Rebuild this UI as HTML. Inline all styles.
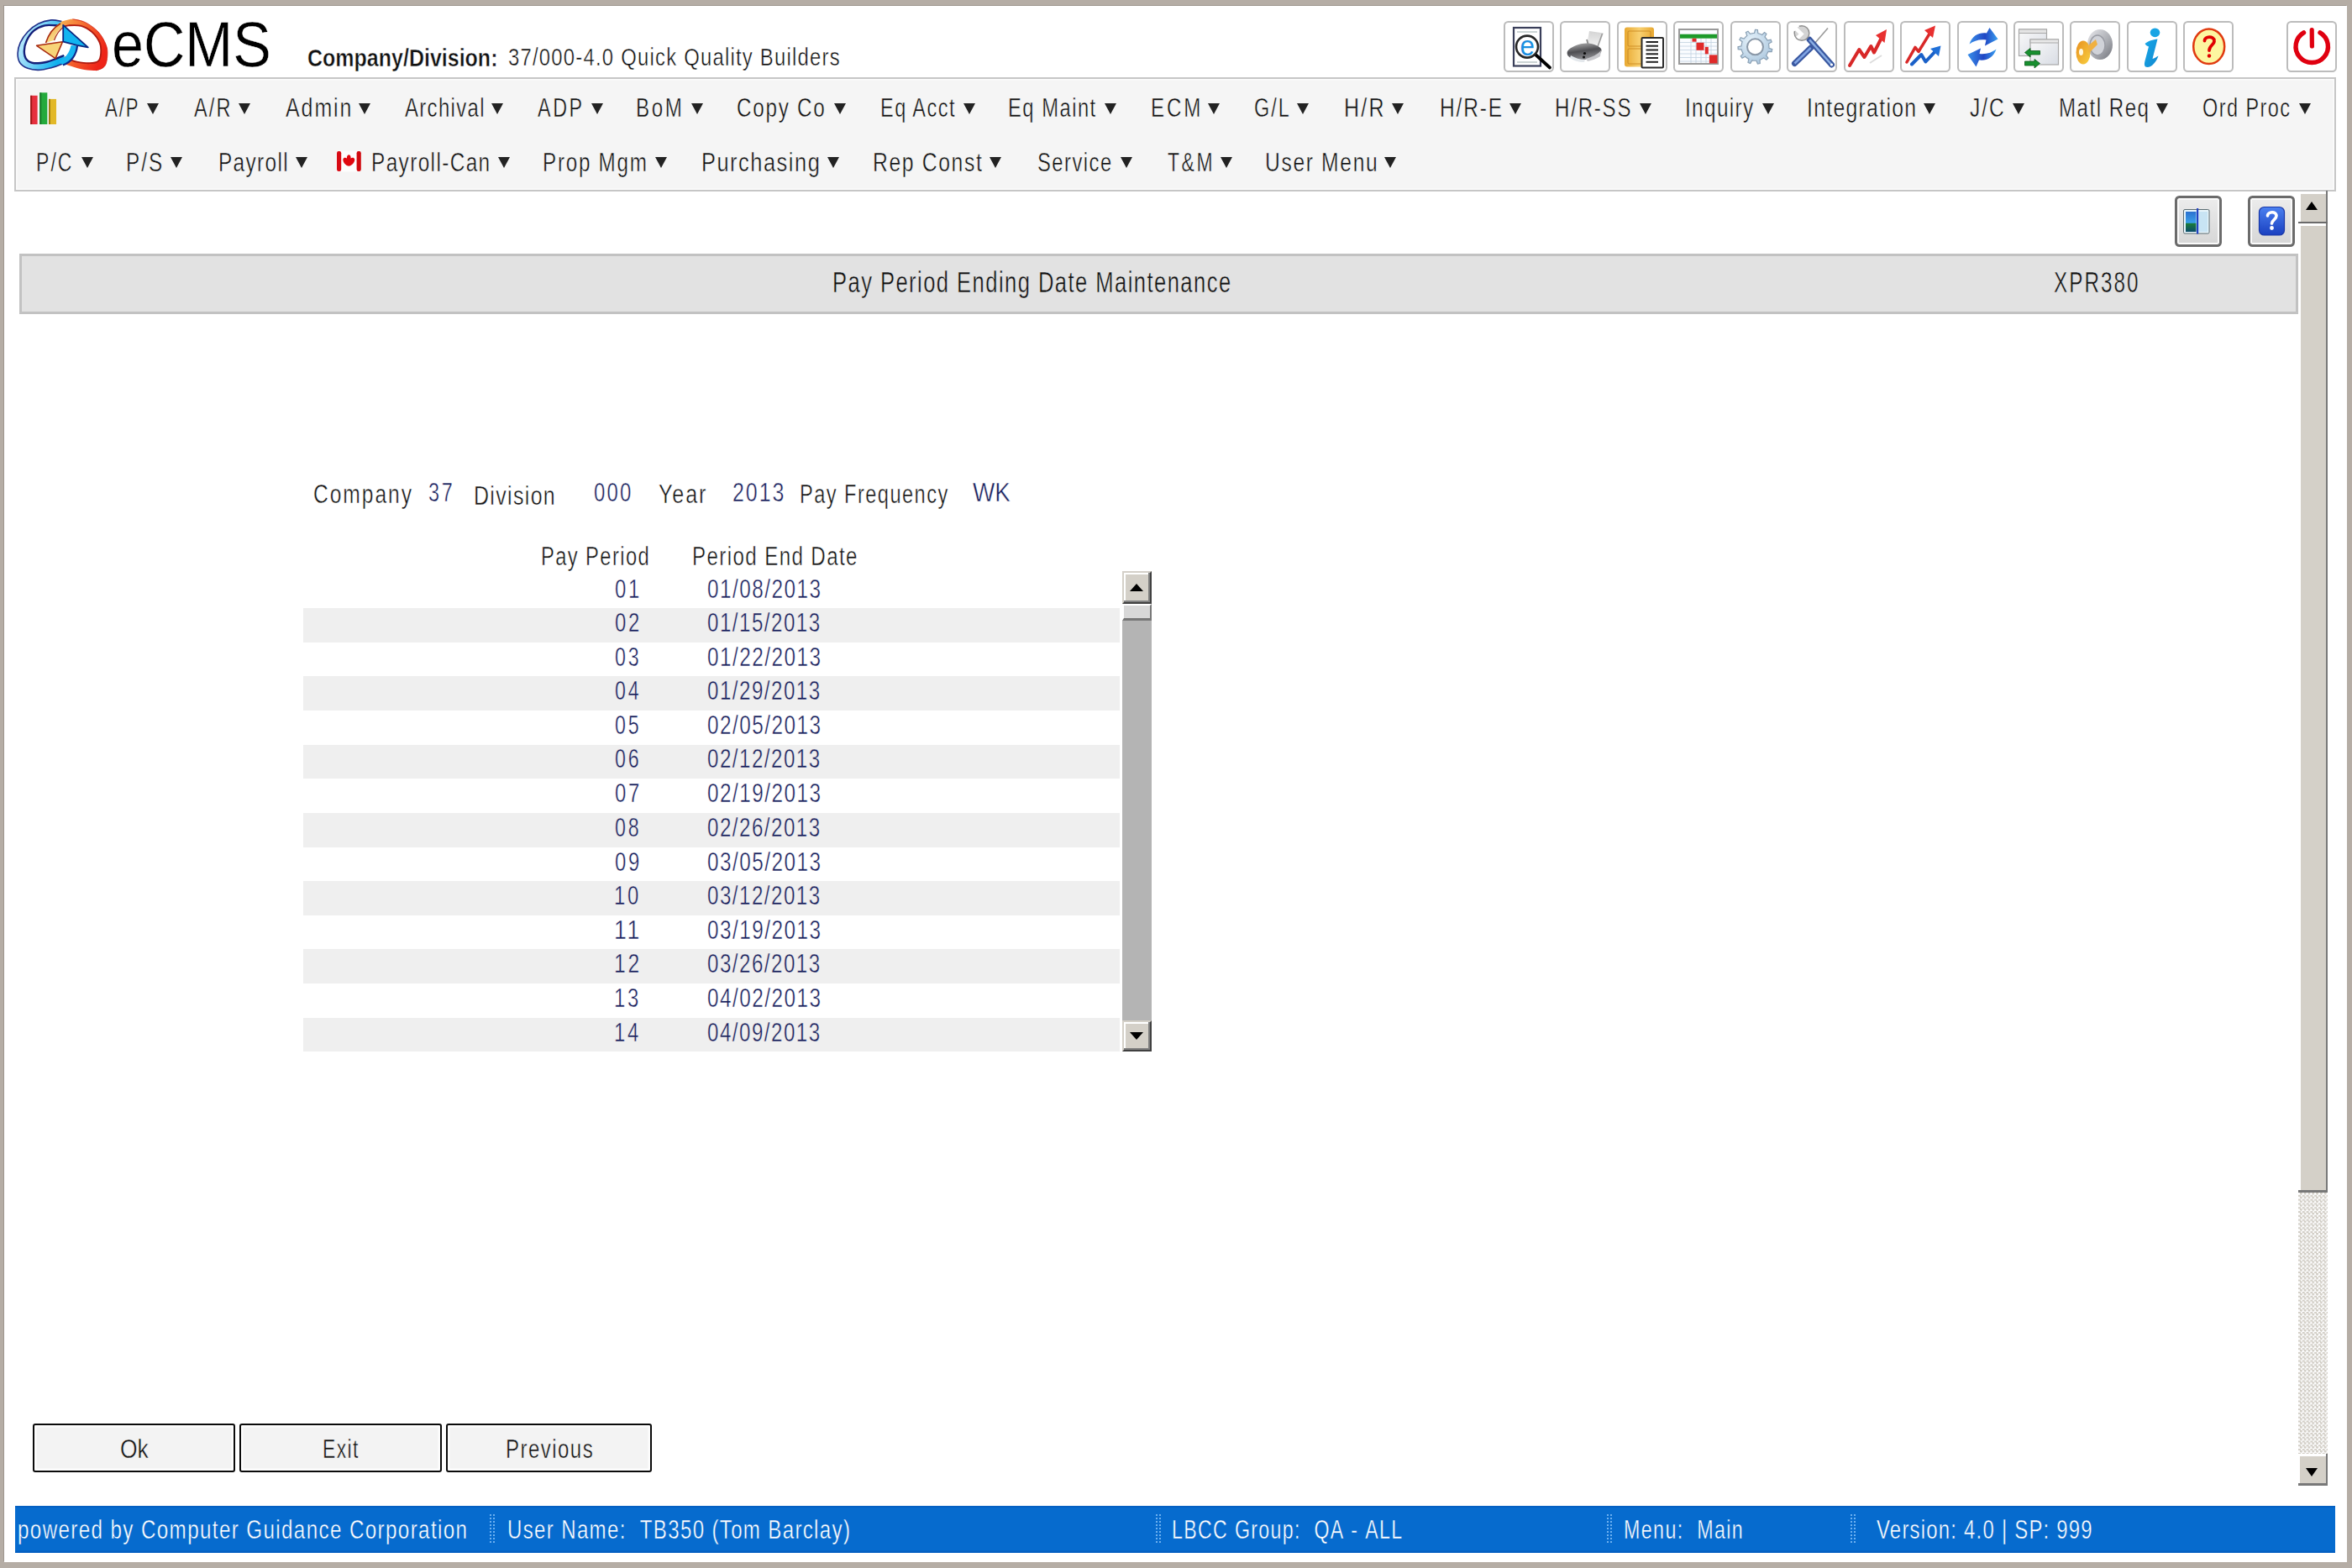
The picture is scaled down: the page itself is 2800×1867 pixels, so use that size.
<!DOCTYPE html>
<html><head><meta charset="utf-8"><style>
html,body{margin:0;padding:0;}
body{width:2800px;height:1867px;position:relative;overflow:hidden;background:#b5ada5;font-family:"Liberation Sans", sans-serif;}
.t{position:absolute;white-space:pre;transform-origin:0 0;}
.arr{position:absolute;width:0;height:0;border-left:7px solid transparent;border-right:7px solid transparent;border-top:13px solid #222;}
.alt{position:absolute;left:361px;width:972px;background:#efefef;}
#page{position:absolute;left:5px;top:7px;width:2789px;height:1853px;background:#fff;box-shadow:-1px -1px 0 #9e968e;}
.abs{position:absolute;box-sizing:border-box;}
#menu{left:17px;top:91.5px;width:2764px;height:136px;background:#f5f5f5;border:2px solid #c6c6c6;box-shadow:inset 0 0 0 1.5px #fcfcfc;}
.tb{position:absolute;top:25px;width:60px;height:61px;box-sizing:border-box;border:2.2px solid #bcbcbc;border-radius:5.5px;background:#fff;overflow:hidden;}
.tb svg{position:absolute;left:0;top:0;}
.cb{position:absolute;top:233px;width:56px;height:61px;box-sizing:border-box;border:3px solid #6b6b6b;border-radius:5.5px;background:linear-gradient(#ececec,#d6d6d6);box-shadow:inset 0 0 0 2px #fafafa;overflow:hidden;}
#title{left:23px;top:302px;width:2713px;height:72px;background:#e2e2e2;border:3px solid #c2c2c2;}
.btn{position:absolute;top:1695px;height:57.5px;box-sizing:border-box;border:2.7px solid #0a0a0a;background:#f3f3f3;border-radius:3px;box-shadow:inset 0 0 0 2.4px #fdfdfd;}
#status{left:17.8px;top:1792.5px;width:2762.6px;height:56.3px;background:#066bce;box-shadow:inset 0 2px 0 #0460c2, inset 0 -2.5px 0 #0460c2;}
.sep{position:absolute;top:1802px;width:8px;height:37px;background-image:radial-gradient(circle,#6cb0f0 1.3px,transparent 1.4px);background-size:4px 4px;}
.sbtn{position:absolute;box-sizing:border-box;background:#d4d0c8;border-style:solid;border-width:2px;border-color:#d4d0c8 #404040 #404040 #d4d0c8;box-shadow:inset -2px -2px 0 #808080, inset 2px 2px 0 #fff;}
.tri-up{position:absolute;width:0;height:0;border-left:8px solid transparent;border-right:8px solid transparent;border-bottom:9px solid #000;}
.tri-dn{position:absolute;width:0;height:0;border-left:8px solid transparent;border-right:8px solid transparent;border-top:9px solid #000;}
.ic{position:absolute;overflow:visible;}

</style></head><body>
<div id="page"></div>
<div id="menu" class="abs"></div>
<div id="title" class="abs"></div>
<div id="status" class="abs"></div>
<div class="sep" style="left:582px"></div><div class="sep" style="left:1375px"></div><div class="sep" style="left:1912px"></div><div class="sep" style="left:2202px"></div>
<div class="btn" style="left:39px;width:241px"></div>
<div class="btn" style="left:285px;width:241px"></div>
<div class="btn" style="left:531px;width:245px"></div>
<!-- outer scrollbar -->
<div class="abs" style="left:2739px;top:231.2px;width:30px;height:1186px;background:#d4d0c8"></div>
<div class="abs" style="left:2768.9px;top:227px;width:2px;height:1193px;background:#787878"></div>
<div class="abs" style="left:2736.4px;top:263.8px;width:34.4px;height:2.5px;background:#6a6a6a"></div>
<div class="abs" style="left:2739px;top:266.3px;width:29.9px;height:3.2px;background:#fff"></div>
<div class="abs" style="left:2736.4px;top:1417px;width:34.4px;height:3.2px;background:#787878"></div>
<div class="abs" style="left:2735.7px;top:1420.2px;width:35.7px;height:311px;background-color:#e8e6e2;background-image:repeating-conic-gradient(#d2cec6 0 25%,#fcfcfc 0 50%);background-size:4.8px 4.8px"></div>
<div class="abs" style="left:2738.3px;top:1733.8px;width:30.6px;height:35px;background:#d4d0c8"></div>
<div class="abs" style="left:2768.9px;top:1730.6px;width:2px;height:38.9px;background:#787878"></div>
<div class="abs" style="left:2736.4px;top:1766.3px;width:34.4px;height:3.2px;background:#787878"></div>
<div class="abs" style="left:2745px;top:239.5px;width:0;height:0;border-left:7.8px solid transparent;border-right:7.8px solid transparent;border-bottom:10.5px solid #000"></div>
<div class="abs" style="left:2745px;top:1747.5px;width:0;height:0;border-left:7.7px solid transparent;border-right:7.7px solid transparent;border-top:10.2px solid #000"></div>
<!-- inner scrollbar -->
<div class="abs" style="left:1336px;top:680px;width:35px;height:572px;background:#b4b4b4"></div>
<div class="sbtn" style="left:1336px;top:680px;width:35px;height:39px"></div>
<div class="abs" style="left:1336px;top:719px;width:35px;height:20px;background:#d8d8d8;border:2px solid #fff;border-color:#fff #777 #777 #fff;border-bottom-width:3px"></div>
<div class="sbtn" style="left:1336px;top:1215px;width:35px;height:37px"></div>
<div class="tri-up" style="left:1345px;top:695px"></div>
<div class="tri-dn" style="left:1345px;top:1229px"></div>
<!-- content buttons -->
<div class="cb" style="left:2589px"></div>
<div class="cb" style="left:2676px"></div>
<!-- toolbar -->
<div class="tb" style="left:1790px"></div><div class="tb" style="left:1857px"></div><div class="tb" style="left:1925px"></div>
<div class="tb" style="left:1992px"></div><div class="tb" style="left:2060px"></div><div class="tb" style="left:2127px"></div>
<div class="tb" style="left:2195px"></div><div class="tb" style="left:2262px"></div><div class="tb" style="left:2330px"></div>
<div class="tb" style="left:2397px"></div><div class="tb" style="left:2464px"></div><div class="tb" style="left:2532px"></div>
<div class="tb" style="left:2599px"></div><div class="tb" style="left:2722px"></div>
<!-- logo -->
<svg class="ic" style="left:15px;top:15px" width="120" height="80" viewBox="0 0 120 80">
<defs>
<linearGradient id="lgb" x1="0" y1="0" x2="1" y2="0.4"><stop offset="0" stop-color="#d8f6ff"/><stop offset="0.45" stop-color="#8ad8f8"/><stop offset="1" stop-color="#10b0ee"/></linearGradient>
<linearGradient id="lgr" x1="0" y1="0" x2="1" y2="0.5"><stop offset="0" stop-color="#f8b050"/><stop offset="0.45" stop-color="#f46a30"/><stop offset="1" stop-color="#ee2418"/></linearGradient>
<linearGradient id="lgo" x1="0" y1="0" x2="0.4" y2="1"><stop offset="0" stop-color="#f6a850"/><stop offset="1" stop-color="#f8e08a"/></linearGradient>
</defs>
<path d="M58.50,10.50 C56.40,10.23 50.55,8.43 45.90,8.90 C41.25,9.37 35.27,10.95 30.60,13.30 C25.93,15.65 21.47,19.27 17.90,23.00 C14.33,26.73 11.17,31.45 9.20,35.70 C7.23,39.95 6.18,44.50 6.10,48.50 C6.02,52.50 6.73,56.73 8.70,59.70 C10.67,62.67 14.25,64.85 17.90,66.30 C21.55,67.75 25.93,68.48 30.60,68.40 C35.27,68.32 41.22,67.00 45.90,65.80 C50.58,64.60 55.85,62.42 58.70,61.20 C61.55,59.98 62.28,58.95 63.00,58.50 L61.20,51.00 C59.50,51.68 54.40,53.82 51.00,55.10 C47.60,56.38 45.05,57.85 40.80,58.70 C36.55,59.55 29.50,60.63 25.50,60.20 C21.50,59.77 18.75,58.48 16.80,56.10 C14.85,53.72 13.80,49.72 13.80,45.90 C13.80,42.08 14.85,37.28 16.80,33.20 C18.75,29.12 21.92,24.38 25.50,21.40 C29.08,18.42 34.05,16.32 38.30,15.30 C42.55,14.28 47.72,15.10 51.00,15.30 C54.28,15.50 56.83,16.30 58.00,16.50 Z" fill="url(#lgb)"/>
<path d="M58.50,10.50 C56.40,10.23 50.55,8.43 45.90,8.90 C41.25,9.37 35.27,10.95 30.60,13.30 C25.93,15.65 21.47,19.27 17.90,23.00 C14.33,26.73 11.17,31.45 9.20,35.70 C7.23,39.95 6.18,44.50 6.10,48.50 C6.02,52.50 6.73,56.73 8.70,59.70 C10.67,62.67 14.25,64.85 17.90,66.30 C21.55,67.75 25.93,68.48 30.60,68.40 C35.27,68.32 41.22,67.00 45.90,65.80 C50.58,64.60 55.85,62.42 58.70,61.20 C61.55,59.98 62.28,58.95 63.00,58.50" fill="none" stroke="#20308a" stroke-width="1.6"/>
<path d="M58.00,16.50 C56.83,16.30 54.28,15.50 51.00,15.30 C47.72,15.10 42.55,14.28 38.30,15.30 C34.05,16.32 29.08,18.42 25.50,21.40 C21.92,24.38 18.75,29.12 16.80,33.20 C14.85,37.28 13.80,42.08 13.80,45.90 C13.80,49.72 14.85,53.72 16.80,56.10 C18.75,58.48 21.50,59.77 25.50,60.20 C29.50,60.63 36.55,59.55 40.80,58.70 C45.05,57.85 47.60,56.38 51.00,55.10 C54.40,53.82 59.50,51.68 61.20,51.00" fill="none" stroke="#14207a" stroke-width="2.4"/>
<path d="M57.00,11.00 C59.40,10.45 66.45,7.58 71.40,7.70 C76.35,7.82 81.60,9.15 86.70,11.70 C91.80,14.25 97.92,18.57 102.00,23.00 C106.08,27.43 109.40,33.63 111.20,38.30 C113.00,42.97 113.05,46.75 112.80,51.00 C112.55,55.25 111.92,60.82 109.70,63.80 C107.48,66.78 104.18,68.32 99.50,68.90 C94.82,69.48 87.13,68.32 81.60,67.30 C76.07,66.28 70.32,64.10 66.30,62.80 C62.28,61.50 58.97,60.05 57.50,59.50 L62.00,53.00 C63.15,53.52 66.48,55.15 68.90,56.10 C71.32,57.05 72.68,58.02 76.50,58.70 C80.32,59.38 87.55,60.37 91.80,60.20 C96.05,60.03 99.78,59.65 102.00,57.70 C104.22,55.75 104.83,52.17 105.10,48.50 C105.37,44.83 105.38,39.95 103.60,35.70 C101.82,31.45 98.07,26.32 94.40,23.00 C90.73,19.68 86.28,17.08 81.60,15.80 C76.92,14.52 69.90,15.10 66.30,15.30 C62.70,15.50 61.05,16.72 60.00,17.00 Z" fill="url(#lgr)"/>
<path d="M60.00,17.00 C61.05,16.72 62.70,15.50 66.30,15.30 C69.90,15.10 76.92,14.52 81.60,15.80 C86.28,17.08 90.73,19.68 94.40,23.00 C98.07,26.32 101.82,31.45 103.60,35.70 C105.38,39.95 105.37,44.83 105.10,48.50 C104.83,52.17 104.22,55.75 102.00,57.70 C99.78,59.65 96.05,60.03 91.80,60.20 C87.55,60.37 80.32,59.38 76.50,58.70 C72.68,58.02 71.32,57.05 68.90,56.10 C66.48,55.15 63.15,53.52 62.00,53.00" fill="none" stroke="#b01a10" stroke-width="1.8"/>
<path d="M71.40,7.70 C73.95,8.37 81.60,9.15 86.70,11.70 C91.80,14.25 97.92,18.57 102.00,23.00 C106.08,27.43 109.40,33.63 111.20,38.30 C113.00,42.97 113.05,46.75 112.80,51.00 C112.55,55.25 111.92,60.82 109.70,63.80 C107.48,66.78 101.20,68.05 99.50,68.90" fill="none" stroke="#d02010" stroke-width="0.8"/>
<path d="M57,12 C50,16 43,24 39.5,36 L49,33 C51,25 55,20 61.5,16 Z" fill="url(#lgo)"/>
<path d="M57,13 C50,17 43,25 39.5,36" fill="none" stroke="#a82a10" stroke-width="1.6"/>
<path d="M61,17 C55,21 52,26 49.5,33" fill="none" stroke="#a82a10" stroke-width="1.2"/>
<polygon points="28.6,39.3 59.5,34.7 51,54.6" fill="#f8d478" stroke="#a82a10" stroke-width="1.6" stroke-linejoin="round"/>
<path d="M55,58 C62,55 68,48 69.5,39 L77,39.5 C76,50 70,59 60,62.5 Z" fill="#18b6f2"/>
<path d="M77,39.5 C76,50 70,59 60,62.5" fill="none" stroke="#10288a" stroke-width="2.2"/>
<polygon points="60.2,14.8 89.8,41.3 76.5,38.8 60.2,34.7" fill="#12b4f0" stroke="#0a2680" stroke-width="1.8" stroke-linejoin="round"/>
</svg>
<!-- bar chart -->
<svg class="ic" style="left:34px;top:108px" width="36" height="42" viewBox="0 0 36 42">
<rect x="2.2" y="5.8" width="8.4" height="34.2" fill="#e6303e"/><rect x="2.2" y="5.8" width="2" height="34.2" fill="#a01818"/>
<rect x="13.3" y="2.3" width="9" height="37.7" fill="#24aa3c"/><rect x="13.3" y="2.3" width="2" height="37.7" fill="#187a28"/>
<rect x="24" y="9.9" width="9" height="30.1" fill="#e2b828"/><rect x="24" y="9.9" width="2" height="30.1" fill="#a08010"/>
</svg>
<!-- canada flag -->
<svg class="ic" style="left:398px;top:178px" width="34" height="28" viewBox="0 0 34 28">
<rect x="2.5" y="1.5" width="29" height="25" fill="#fdfdfd"/>
<rect x="3" y="2" width="5.2" height="24" rx="2.2" fill="#d80a14"/><rect x="26.6" y="2" width="5.2" height="24" rx="2.2" fill="#d00a10"/>
<path d="M17.3,6.2 C19.2,6.2 19.8,8.5 19.6,10.5 C21,9.5 23.5,9.3 24.2,11.5 C24.6,13.5 23,16.5 21,18 C19.8,19 18.5,19.5 17.3,19.8 C16,19.5 14.6,19 13.5,18 C11.5,16.5 10,13.5 10.4,11.5 C11,9.3 13.5,9.5 15,10.5 C14.8,8.5 15.4,6.2 17.3,6.2 Z" fill="#e00810"/>
</svg>
<!-- toolbar icons -->
<svg class="ic" style="left:1789.5px;top:24.7px" width="60" height="61" viewBox="0 0 60 61">
<rect x="12" y="8" width="32" height="45.5" fill="#fff" stroke="#3a3f5a" stroke-width="2.2"/>
<line x1="16" y1="13" x2="40" y2="13" stroke="#9aa" stroke-width="1"/><line x1="16" y1="49" x2="40" y2="49" stroke="#9aa" stroke-width="1"/>
<line x1="38" y1="40" x2="55" y2="55.5" stroke="#000" stroke-width="3.8" stroke-linecap="round"/>
<circle cx="28" cy="30.6" r="13" fill="#fff" stroke="#262626" stroke-width="2.6"/>
<text x="28.2" y="40.8" text-anchor="middle" font-family="Liberation Sans" font-size="33" fill="#1a8ee0" transform="translate(28.2,40.8) scale(0.95,1) translate(-28.2,-40.8)">e</text>
</svg>
<svg class="ic" style="left:1857.3px;top:24.7px" width="60" height="61" viewBox="0 0 60 61">
<defs><linearGradient id="pg" x1="0" y1="0" x2="0" y2="1"><stop offset="0" stop-color="#d4d4d4"/><stop offset="1" stop-color="#f2f2f2"/></linearGradient>
<linearGradient id="pb" x1="0" y1="0" x2="0.3" y2="1"><stop offset="0" stop-color="#b8b8b8"/><stop offset="0.55" stop-color="#4e4e52"/><stop offset="1" stop-color="#8a8a8e"/></linearGradient></defs>
<path d="M35,12 L52,14.5 L46,31 L32,29 Z" fill="url(#pg)"/>
<path d="M50.5,15 L44.5,32" stroke="#9a9a9a" stroke-width="1.5"/>
<path d="M9,36 C12,31 24,26 33,26.5 C40,27 48,30 49.5,34 C50,38 46,42 40,44 C32,47 20,47 13,44 C9,42 8,39 9,36 Z" fill="url(#pb)"/>
<path d="M31,45 C38,43 45,40 49,35 L48,42 C44,45 38,47 33,48 Z" fill="#c8c8cc"/>
<path d="M13,41 C18,44 24,46 30,46 L29,49 C22,49 16,47 12,44 Z" fill="#e4e8ec"/>
<circle cx="29.5" cy="38.5" r="1.6" fill="#0a0a0a"/><circle cx="28.5" cy="43" r="1.5" fill="#111"/>
<path d="M32,22 L33.5,27" stroke="#8a8a8a" stroke-width="1.8"/>
</svg>
<svg class="ic" style="left:1924.5px;top:24.7px" width="60" height="61" viewBox="0 0 60 61">
<defs><linearGradient id="cab" x1="0" y1="0" x2="1" y2="0"><stop offset="0" stop-color="#e8a830"/><stop offset="0.5" stop-color="#f8d070"/><stop offset="1" stop-color="#e8a830"/></linearGradient></defs>
<rect x="9" y="7.5" width="35" height="47" rx="3" fill="url(#cab)"/>
<rect x="13" y="12" width="27" height="18" rx="1.5" fill="none" stroke="#d09028" stroke-width="1.2"/>
<rect x="13" y="33" width="27" height="18" rx="1.5" fill="none" stroke="#d09028" stroke-width="1.2"/>
<rect x="29.5" y="20" width="25.5" height="35.5" rx="1" fill="#fff" stroke="#2a2a2a" stroke-width="2"/>
<g stroke="#222" stroke-width="2"><line x1="34.5" y1="25" x2="49" y2="25"/><line x1="34.5" y1="29.7" x2="49" y2="29.7"/><line x1="34.5" y1="34.5" x2="49" y2="34.5"/><line x1="34.5" y1="39.3" x2="49" y2="39.3"/><line x1="34.5" y1="44" x2="49" y2="44"/><line x1="34.5" y1="48.8" x2="49" y2="48.8"/></g>
</svg>
<svg class="ic" style="left:1992.1px;top:24.7px" width="60" height="61" viewBox="0 0 60 61">
<rect x="7" y="10" width="46" height="41" fill="#fafcff" stroke="#9a9a9a" stroke-width="2"/>
<rect x="8" y="15.7" width="44" height="5" fill="#1c9a2a"/>
<g stroke="#c0d0e0" stroke-width="0.8"><line x1="8" y1="25.5" x2="52" y2="25.5"/><line x1="8" y1="30" x2="52" y2="30"/><line x1="8" y1="34.5" x2="52" y2="34.5"/><line x1="8" y1="39" x2="52" y2="39"/><line x1="8" y1="43.5" x2="52" y2="43.5"/><line x1="8" y1="48" x2="52" y2="48"/>
<line x1="21" y1="21" x2="21" y2="50"/><line x1="27" y1="21" x2="27" y2="50"/><line x1="33" y1="21" x2="33" y2="50"/><line x1="39" y1="21" x2="39" y2="50"/><line x1="45" y1="21" x2="45" y2="50"/></g>
<g fill="#e02a2a"><rect x="22.5" y="20.7" width="5" height="4"/><rect x="27.5" y="25.8" width="9" height="9"/><rect x="37.8" y="30.9" width="4" height="8.4"/><rect x="42.9" y="40.4" width="9.5" height="10"/></g>
</svg>
<svg class="ic" style="left:2059.5px;top:24.7px" width="60" height="61" viewBox="0 0 60 61">
<defs><radialGradient id="gear" cx="0.4" cy="0.35" r="0.7"><stop offset="0" stop-color="#e8f4fc"/><stop offset="1" stop-color="#a8c4dc"/></radialGradient></defs>
<g transform="translate(29.5,30.8)">
<path d="M16.50,0.00 L16.44,1.41 L20.29,2.92 L19.67,5.78 L15.54,5.54 L13.88,8.92 L13.88,8.92 L13.07,10.08 L15.49,13.42 L13.42,15.49 L10.08,13.07 L6.85,15.01 L6.85,15.01 L5.54,15.54 L5.78,19.67 L2.92,20.29 L1.41,16.44 L-2.35,16.33 L-2.35,16.33 L-3.74,16.07 L-5.78,19.67 L-8.52,18.65 L-7.70,14.59 L-10.81,12.47 L-10.81,12.47 L-11.83,11.50 L-15.49,13.42 L-17.25,11.08 L-14.37,8.11 L-15.83,4.65 L-15.83,4.65 L-16.17,3.28 L-20.29,2.92 L-20.50,0.00 L-16.47,-0.94 L-15.83,-4.65 L-15.83,-4.65 L-15.38,-5.99 L-18.65,-8.52 L-17.25,-11.08 L-13.35,-9.70 L-10.81,-12.47 L-10.81,-12.47 L-9.70,-13.35 L-11.08,-17.25 L-8.52,-18.65 L-5.99,-15.38 L-2.35,-16.33 L-2.35,-16.33 L-0.94,-16.47 L-0.00,-20.50 L2.92,-20.29 L3.28,-16.17 L6.85,-15.01 L6.85,-15.01 L8.11,-14.37 L11.08,-17.25 L13.42,-15.49 L11.50,-11.83 L13.88,-8.92 L13.88,-8.92 L14.59,-7.70 L18.65,-8.52 L19.67,-5.78 L16.07,-3.74 L16.50,-0.00 Z" fill="url(#gear)" stroke="#8aa0b4" stroke-width="1.2"/>
<circle r="9.5" fill="#fff" stroke="#8a98a8" stroke-width="2"/>
</g>
</svg>
<svg class="ic" style="left:2127.1px;top:24.7px" width="60" height="61" viewBox="0 0 60 61">
<line x1="28.7" y1="32" x2="49" y2="8.4" stroke="#9a9a9a" stroke-width="1.6"/>
<line x1="9.5" y1="50.5" x2="28.7" y2="32" stroke="#3a58a0" stroke-width="7" stroke-linecap="round"/>
<line x1="9.5" y1="50.5" x2="28.7" y2="32" stroke="#80a4e4" stroke-width="2.5"/>
<line x1="27.2" y1="22.3" x2="53.5" y2="52" stroke="#3a58a0" stroke-width="7" stroke-linecap="round"/>
<line x1="27.2" y1="22.3" x2="53.5" y2="52" stroke="#8aaee4" stroke-width="2.5"/>
<circle cx="53.5" cy="52" r="1.6" fill="#fff"/>
<circle cx="18" cy="14.5" r="8.8" fill="#d4d4d4"/>
<path d="M10,8 L17.5,15.5 L12,21" fill="none" stroke="#fff" stroke-width="4.5"/>
<circle cx="18" cy="14.5" r="8.8" fill="none" stroke="#909090" stroke-width="1.5" stroke-dasharray="30 8"/>
</svg>
<svg class="ic" style="left:2194.5px;top:24.7px" width="60" height="61" viewBox="0 0 60 61">
<polyline points="7,53 18.3,34 24.5,43 32.3,30 36,37.5 46,18" fill="none" stroke="#d82828" stroke-width="4" stroke-linejoin="round" stroke-linecap="round"/>
<polygon points="51,10 38,17 48.5,26" fill="#e83030"/>
<line x1="31" y1="50" x2="45" y2="41" stroke="#ddd" stroke-width="2"/>
</svg>
<svg class="ic" style="left:2262.1px;top:24.7px" width="60" height="61" viewBox="0 0 60 61">
<polyline points="8,49 18,31.4 22,36.5 37,12" fill="none" stroke="#d82828" stroke-width="3.5" stroke-linejoin="round" stroke-linecap="round"/>
<polygon points="42,5.6 29,11 39,20" fill="#e83030"/>
<polyline points="14,51.5 25.3,40 30.4,48.5 43,35" fill="none" stroke="#1a60c8" stroke-width="4" stroke-linejoin="round" stroke-linecap="round"/>
<polygon points="48.5,29.5 36,33 46,42" fill="#2070d8"/>
</svg>
<svg class="ic" style="left:2329.5px;top:24.7px" width="60" height="61" viewBox="0 0 60 61">
<defs><linearGradient id="rf" x1="0" y1="0" x2="1" y2="0"><stop offset="0" stop-color="#3a90ea"/><stop offset="0.55" stop-color="#2046c4"/><stop offset="1" stop-color="#3aa0f0"/></linearGradient></defs>
<path d="M14.5,27.5 C18,17 26,13.5 35,14.5 L38.5,8 L48.5,21.5 L33,29.5 L34.5,22.5 C26,21.5 20,23.5 14.5,27.5 Z" fill="url(#rf)"/>
<path d="M46.5,33.5 C43,44 35,47.5 26,46.5 L22.5,54.5 L12.5,40 L28,32.5 L26.5,39 C35,40 41,37.5 46.5,33.5 Z" fill="url(#rf)"/>
</svg>
<svg class="ic" style="left:2397.1px;top:24.7px" width="60" height="61" viewBox="0 0 60 61">
<defs><linearGradient id="wn" x1="0" y1="0" x2="1" y2="1"><stop offset="0" stop-color="#fafafa"/><stop offset="1" stop-color="#d8dce4"/></linearGradient></defs>
<rect x="6.5" y="10" width="33" height="31.5" fill="url(#wn)" stroke="#a8a8a8" stroke-width="1.2"/>
<rect x="6.5" y="10" width="33" height="4.5" fill="#e4e4e4" stroke="#a8a8a8" stroke-width="1"/>
<rect x="20" y="22" width="33.5" height="30" fill="url(#wn)" stroke="#a8a8a8" stroke-width="1.2"/>
<rect x="20" y="22" width="33.5" height="4" fill="#e8e8e8" stroke="#a8a8a8" stroke-width="1"/>
<polygon points="13.5,37.5 20,32.5 20,35.5 31.5,35.5 31.5,40 20,40 20,43" fill="#189030" stroke="#0a5a18" stroke-width="0.8"/>
<polygon points="31.5,50.5 25,45.5 25,48 13.5,48 13.5,53 25,53 25,56" fill="#189030" stroke="#0a5a18" stroke-width="0.8"/>
</svg>
<svg class="ic" style="left:2464.5px;top:24.7px" width="60" height="61" viewBox="0 0 60 61">
<defs><linearGradient id="dsk" x1="0" y1="0" x2="1" y2="1"><stop offset="0" stop-color="#e8e8ec"/><stop offset="0.6" stop-color="#a8aab0"/><stop offset="1" stop-color="#70727a"/></linearGradient>
<linearGradient id="key" x1="0" y1="0" x2="1" y2="1"><stop offset="0" stop-color="#e89020"/><stop offset="1" stop-color="#f8d040"/></linearGradient></defs>
<ellipse cx="35" cy="28" rx="15" ry="18" fill="url(#dsk)"/>
<ellipse cx="32" cy="29" rx="9" ry="12" fill="#d0d2d8" stroke="#9a9ca4" stroke-width="1.5"/>
<ellipse cx="15" cy="37.5" rx="8.5" ry="14" fill="url(#key)"/>
<ellipse cx="12.5" cy="37" rx="2.5" ry="4" fill="#fff8e0"/>
<polygon points="20,30 30,22 32,28 22,38" fill="#f0b040"/>
</svg>
<svg class="ic" style="left:2532.1px;top:24.7px" width="60" height="61" viewBox="0 0 60 61">
<defs><linearGradient id="ib" x1="0" y1="0" x2="1" y2="1"><stop offset="0" stop-color="#18a8e8"/><stop offset="1" stop-color="#1288d0"/></linearGradient></defs>
<ellipse cx="33.5" cy="13.8" rx="5.8" ry="5.4" fill="#18a4e4"/>
<path d="M21.5,27 C25,24 31,22 36.5,21.5 L30.5,45 C32.5,44.5 35,43 37.5,41.5 C35,49 29.5,55 24.5,55 C20.5,55 20.5,51.5 21.5,47.5 L26,30.5 C24.5,30 23,29.5 21.5,27 Z" fill="url(#ib)"/>
</svg>
<svg class="ic" style="left:2599.8px;top:25px" width="60" height="61" viewBox="0 0 60 61">
<ellipse cx="29.7" cy="30.3" rx="18.5" ry="20.8" fill="#fdf6a0" stroke="#e03a10" stroke-width="2.5"/>
<path d="M24.5,23.5 C24.5,18 35.5,17.5 36,23.5 C36.5,28 30,29 30,35" fill="none" stroke="#e00000" stroke-width="3.8" stroke-linecap="round"/>
<circle cx="30" cy="41.5" r="2.2" fill="#e00000"/>
</svg>
<svg class="ic" style="left:2721.8px;top:25px" width="60" height="61" viewBox="0 0 60 61">
<path d="M20.5,13.8 A19.2,19.2 0 1 0 40,13.8" fill="none" stroke="#e00010" stroke-width="5.4" stroke-linecap="round"/>
<line x1="30.2" y1="10.5" x2="30.4" y2="30" stroke="#e00010" stroke-width="5.2" stroke-linecap="round"/>
</svg>
<!-- content buttons icons -->
<svg class="ic" style="left:2588.8px;top:233px" width="56" height="61" viewBox="0 0 56 61">
<defs><linearGradient id="sky" x1="0" y1="0" x2="0" y2="1"><stop offset="0" stop-color="#2a70d0"/><stop offset="0.55" stop-color="#3aa0e8"/><stop offset="0.6" stop-color="#1a7a3a"/><stop offset="1" stop-color="#0a4a6a"/></linearGradient></defs>
<rect x="10.5" y="16.5" width="30.5" height="28.5" rx="1.5" fill="#e8f6fc" stroke="#5a6a70" stroke-width="1"/>
<rect x="13" y="19" width="12.5" height="24" fill="url(#sky)"/>
<rect x="28.5" y="19" width="10.5" height="24" fill="#c8e4f4"/>
<rect x="26" y="15" width="2.2" height="30.5" fill="#2040c0"/>
</svg>
<svg class="ic" style="left:2675.5px;top:233px" width="56" height="61" viewBox="0 0 56 61">
<defs><linearGradient id="qb" x1="0" y1="0" x2="0" y2="1"><stop offset="0" stop-color="#4a80f0"/><stop offset="1" stop-color="#1a40c0"/></linearGradient></defs>
<rect x="13.5" y="13.5" width="30" height="33.5" rx="6" fill="url(#qb)" stroke="#1a38a8" stroke-width="1.2"/>
<path d="M23.5,24 C23.5,18.5 34,18 34,24 C34,28 29,28.5 28.5,33" fill="none" stroke="#fff" stroke-width="3.6" stroke-linecap="round"/>
<circle cx="28.5" cy="38.5" r="2.4" fill="#fff"/>
</svg>

<div class="alt" style="top:724.22px;height:40.62px"></div><div class="alt" style="top:805.46px;height:40.62px"></div><div class="alt" style="top:886.70px;height:40.62px"></div><div class="alt" style="top:967.94px;height:40.62px"></div><div class="alt" style="top:1049.18px;height:40.62px"></div><div class="alt" style="top:1130.42px;height:40.62px"></div><div class="alt" style="top:1211.66px;height:40.62px"></div>
<div class="arr" style="left:175.3px;top:122.7px"></div><div class="arr" style="left:284.0px;top:122.7px"></div><div class="arr" style="left:427.0px;top:122.7px"></div><div class="arr" style="left:585.0px;top:122.7px"></div><div class="arr" style="left:704.0px;top:122.7px"></div><div class="arr" style="left:823.0px;top:122.7px"></div><div class="arr" style="left:993.0px;top:122.7px"></div><div class="arr" style="left:1147.0px;top:122.7px"></div><div class="arr" style="left:1315.0px;top:122.7px"></div><div class="arr" style="left:1438.0px;top:122.7px"></div><div class="arr" style="left:1544.0px;top:122.7px"></div><div class="arr" style="left:1657.0px;top:122.7px"></div><div class="arr" style="left:1797.0px;top:122.7px"></div><div class="arr" style="left:1952.0px;top:122.7px"></div><div class="arr" style="left:2098.0px;top:122.7px"></div><div class="arr" style="left:2290.0px;top:122.7px"></div><div class="arr" style="left:2396.0px;top:122.7px"></div><div class="arr" style="left:2567.0px;top:122.7px"></div><div class="arr" style="left:2737.0px;top:122.7px"></div><div class="arr" style="left:96.8px;top:187.2px"></div><div class="arr" style="left:203.0px;top:187.2px"></div><div class="arr" style="left:352.0px;top:187.2px"></div><div class="arr" style="left:593.0px;top:187.2px"></div><div class="arr" style="left:780.0px;top:187.2px"></div><div class="arr" style="left:985.0px;top:187.2px"></div><div class="arr" style="left:1178.0px;top:187.2px"></div><div class="arr" style="left:1334.0px;top:187.2px"></div><div class="arr" style="left:1453.0px;top:187.2px"></div><div class="arr" style="left:1648.0px;top:187.2px"></div>
<span class="t" id="t0" style="left:133.29px;top:16.20px;font-size:75.51px;line-height:75.51px;color:#000;-webkit-text-stroke:0.45px #fff;letter-spacing:0.000px;transform:scaleX(0.9046)">eCMS</span><span class="t" id="t1" style="left:366.16px;top:53.58px;font-size:29.89px;line-height:29.89px;color:#111;font-weight:700;-webkit-text-stroke:0.45px #fff;letter-spacing:0.000px;transform:scaleX(0.8370)">Company/Division:</span><span class="t" id="t2" style="left:605.21px;top:53.26px;font-size:30.03px;line-height:30.03px;color:#111;-webkit-text-stroke:0.45px #fff;letter-spacing:1.546px;transform:scaleX(0.7946)">37/000-4.0 Quick Quality Builders</span><span class="t" id="t3" style="left:124.50px;top:114.16px;font-size:30.75px;line-height:30.75px;color:#111;-webkit-text-stroke:0.45px #f5f5f5;letter-spacing:2.670px;transform:scaleX(0.7221)">A/P</span><span class="t" id="t4" style="left:230.50px;top:114.16px;font-size:30.75px;line-height:30.75px;color:#111;-webkit-text-stroke:0.45px #f5f5f5;letter-spacing:2.781px;transform:scaleX(0.7667)">A/R</span><span class="t" id="t5" style="left:340.00px;top:114.16px;font-size:30.75px;line-height:30.75px;color:#111;-webkit-text-stroke:0.45px #f5f5f5;letter-spacing:2.391px;transform:scaleX(0.8113)">Admin</span><span class="t" id="t6" style="left:482.00px;top:114.16px;font-size:30.75px;line-height:30.75px;color:#111;-webkit-text-stroke:0.45px #f5f5f5;letter-spacing:1.707px;transform:scaleX(0.7786)">Archival</span><span class="t" id="t7" style="left:640.00px;top:114.16px;font-size:30.75px;line-height:30.75px;color:#111;-webkit-text-stroke:0.45px #f5f5f5;letter-spacing:3.429px;transform:scaleX(0.7586)">ADP</span><span class="t" id="t8" style="left:757.43px;top:114.16px;font-size:30.75px;line-height:30.75px;color:#111;-webkit-text-stroke:0.45px #f5f5f5;letter-spacing:3.312px;transform:scaleX(0.7858)">BoM</span><span class="t" id="t9" style="left:877.21px;top:114.16px;font-size:30.75px;line-height:30.75px;color:#111;-webkit-text-stroke:0.45px #f5f5f5;letter-spacing:2.177px;transform:scaleX(0.7888)">Copy Co</span><span class="t" id="t10" style="left:1047.97px;top:114.16px;font-size:30.75px;line-height:30.75px;color:#111;-webkit-text-stroke:0.45px #f5f5f5;letter-spacing:1.934px;transform:scaleX(0.7634)">Eq Acct</span><span class="t" id="t11" style="left:1199.95px;top:114.16px;font-size:30.75px;line-height:30.75px;color:#111;-webkit-text-stroke:0.45px #f5f5f5;letter-spacing:1.902px;transform:scaleX(0.7738)">Eq Maint</span><span class="t" id="t12" style="left:1369.93px;top:114.16px;font-size:30.75px;line-height:30.75px;color:#111;-webkit-text-stroke:0.45px #f5f5f5;letter-spacing:3.595px;transform:scaleX(0.7862)">ECM</span><span class="t" id="t13" style="left:1493.24px;top:114.16px;font-size:30.75px;line-height:30.75px;color:#111;-webkit-text-stroke:0.45px #f5f5f5;letter-spacing:2.692px;transform:scaleX(0.7622)">G/L</span><span class="t" id="t14" style="left:1600.37px;top:114.16px;font-size:30.75px;line-height:30.75px;color:#111;-webkit-text-stroke:0.45px #f5f5f5;letter-spacing:2.764px;transform:scaleX(0.8147)">H/R</span><span class="t" id="t15" style="left:1713.90px;top:114.16px;font-size:30.75px;line-height:30.75px;color:#111;-webkit-text-stroke:0.45px #f5f5f5;letter-spacing:2.255px;transform:scaleX(0.7982)">H/R-E</span><span class="t" id="t16" style="left:1850.93px;top:114.16px;font-size:30.75px;line-height:30.75px;color:#111;-webkit-text-stroke:0.45px #f5f5f5;letter-spacing:2.260px;transform:scaleX(0.7833)">H/R-SS</span><span class="t" id="t17" style="left:2006.41px;top:114.16px;font-size:30.75px;line-height:30.75px;color:#111;-webkit-text-stroke:0.45px #f5f5f5;letter-spacing:1.684px;transform:scaleX(0.7925)">Inquiry</span><span class="t" id="t18" style="left:2150.89px;top:114.16px;font-size:30.75px;line-height:30.75px;color:#111;-webkit-text-stroke:0.45px #f5f5f5;letter-spacing:1.580px;transform:scaleX(0.8072)">Integration</span><span class="t" id="t19" style="left:2344.50px;top:114.16px;font-size:30.75px;line-height:30.75px;color:#111;-webkit-text-stroke:0.45px #f5f5f5;letter-spacing:2.551px;transform:scaleX(0.7968)">J/C</span><span class="t" id="t20" style="left:2450.93px;top:114.16px;font-size:30.75px;line-height:30.75px;color:#111;-webkit-text-stroke:0.45px #f5f5f5;letter-spacing:1.904px;transform:scaleX(0.7843)">Matl Req</span><span class="t" id="t21" style="left:2622.24px;top:114.16px;font-size:30.75px;line-height:30.75px;color:#111;-webkit-text-stroke:0.45px #f5f5f5;letter-spacing:1.931px;transform:scaleX(0.7620)">Ord Proc</span><span class="t" id="t22" style="left:42.53px;top:178.38px;font-size:31.33px;line-height:31.33px;color:#111;-webkit-text-stroke:0.45px #f5f5f5;letter-spacing:2.756px;transform:scaleX(0.7358)">P/C</span><span class="t" id="t23" style="left:150.45px;top:178.38px;font-size:31.33px;line-height:31.33px;color:#111;-webkit-text-stroke:0.45px #f5f5f5;letter-spacing:2.644px;transform:scaleX(0.7757)">P/S</span><span class="t" id="t24" style="left:259.94px;top:178.38px;font-size:31.33px;line-height:31.33px;color:#111;-webkit-text-stroke:0.45px #f5f5f5;letter-spacing:1.700px;transform:scaleX(0.7795)">Payroll</span><span class="t" id="t25" style="left:441.94px;top:178.38px;font-size:31.33px;line-height:31.33px;color:#111;-webkit-text-stroke:0.45px #f5f5f5;letter-spacing:1.780px;transform:scaleX(0.7780)">Payroll-Can</span><span class="t" id="t26" style="left:646.45px;top:178.38px;font-size:31.33px;line-height:31.33px;color:#111;-webkit-text-stroke:0.45px #f5f5f5;letter-spacing:2.244px;transform:scaleX(0.7734)">Prop Mgm</span><span class="t" id="t27" style="left:835.38px;top:178.38px;font-size:31.33px;line-height:31.33px;color:#111;-webkit-text-stroke:0.45px #f5f5f5;letter-spacing:1.893px;transform:scaleX(0.8102)">Purchasing</span><span class="t" id="t28" style="left:1039.42px;top:178.38px;font-size:31.33px;line-height:31.33px;color:#111;-webkit-text-stroke:0.45px #f5f5f5;letter-spacing:2.032px;transform:scaleX(0.7905)">Rep Const</span><span class="t" id="t29" style="left:1235.24px;top:178.38px;font-size:31.33px;line-height:31.33px;color:#111;-webkit-text-stroke:0.45px #f5f5f5;letter-spacing:1.908px;transform:scaleX(0.7603)">Service</span><span class="t" id="t30" style="left:1390.00px;top:178.38px;font-size:31.33px;line-height:31.33px;color:#111;-webkit-text-stroke:0.45px #f5f5f5;letter-spacing:3.557px;transform:scaleX(0.7317)">T&amp;M</span><span class="t" id="t31" style="left:1506.43px;top:178.38px;font-size:31.33px;line-height:31.33px;color:#111;-webkit-text-stroke:0.45px #f5f5f5;letter-spacing:2.080px;transform:scaleX(0.7872)">User Menu</span><span class="t" id="t32" style="left:991.03px;top:318.68px;font-size:34.80px;line-height:34.80px;color:#111;-webkit-text-stroke:0.45px #e2e2e2;letter-spacing:1.942px;transform:scaleX(0.7358)">Pay Period Ending Date Maintenance</span><span class="t" id="t33" style="left:2445.00px;top:318.68px;font-size:34.80px;line-height:34.80px;color:#111;-webkit-text-stroke:0.45px #e2e2e2;letter-spacing:2.849px;transform:scaleX(0.6986)">XPR380</span><span class="t" id="t34" style="left:373.21px;top:572.88px;font-size:31.33px;line-height:31.33px;color:#151515;-webkit-text-stroke:0.45px #fff;letter-spacing:2.471px;transform:scaleX(0.7862)">Company</span><span class="t" id="t35" style="left:509.77px;top:570.59px;font-size:31.91px;line-height:31.91px;color:#18205c;-webkit-text-stroke:0.45px #fff;letter-spacing:3.748px;transform:scaleX(0.7347)">37</span><span class="t" id="t36" style="left:564.41px;top:574.88px;font-size:31.33px;line-height:31.33px;color:#151515;-webkit-text-stroke:0.45px #fff;letter-spacing:1.687px;transform:scaleX(0.7963)">Division</span><span class="t" id="t37" style="left:707.25px;top:570.59px;font-size:31.91px;line-height:31.91px;color:#18205c;-webkit-text-stroke:0.45px #fff;letter-spacing:2.860px;transform:scaleX(0.7521)">000</span><span class="t" id="t38" style="left:784.00px;top:572.88px;font-size:31.33px;line-height:31.33px;color:#151515;-webkit-text-stroke:0.45px #fff;letter-spacing:2.328px;transform:scaleX(0.8024)">Year</span><span class="t" id="t39" style="left:872.22px;top:570.59px;font-size:31.91px;line-height:31.91px;color:#18205c;-webkit-text-stroke:0.45px #fff;letter-spacing:2.563px;transform:scaleX(0.7809)">2013</span><span class="t" id="t40" style="left:951.99px;top:572.88px;font-size:31.33px;line-height:31.33px;color:#151515;-webkit-text-stroke:0.45px #fff;letter-spacing:1.936px;transform:scaleX(0.7535)">Pay Frequency</span><span class="t" id="t41" style="left:1158.00px;top:570.59px;font-size:31.91px;line-height:31.91px;color:#18205c;-webkit-text-stroke:0.45px #fff;letter-spacing:0.000px;transform:scaleX(0.8735)">WK</span><span class="t" id="t42" style="left:643.50px;top:647.23px;font-size:31.62px;line-height:31.62px;color:#151515;-webkit-text-stroke:0.45px #fff;letter-spacing:1.865px;transform:scaleX(0.7509)">Pay Period</span><span class="t" id="t43" style="left:823.97px;top:647.23px;font-size:31.62px;line-height:31.62px;color:#151515;-webkit-text-stroke:0.45px #fff;letter-spacing:1.820px;transform:scaleX(0.7632)">Period End Date</span><span class="t" id="t44" style="left:732.24px;top:685.88px;font-size:31.33px;line-height:31.33px;color:#18205c;-webkit-text-stroke:0.45px #fff;letter-spacing:3.603px;transform:scaleX(0.7640)">01</span><span class="t" id="t45" style="left:842.22px;top:685.88px;font-size:31.33px;line-height:31.33px;color:#18205c;-webkit-text-stroke:0.45px #fff;letter-spacing:1.918px;transform:scaleX(0.7763)">01/08/2013</span><span class="t" id="t46" style="left:732.24px;top:725.98px;font-size:31.33px;line-height:31.33px;color:#18205c;-webkit-text-stroke:0.45px #efefef;letter-spacing:3.603px;transform:scaleX(0.7640)">02</span><span class="t" id="t47" style="left:842.23px;top:725.98px;font-size:31.33px;line-height:31.33px;color:#18205c;-webkit-text-stroke:0.45px #efefef;letter-spacing:1.918px;transform:scaleX(0.7705)">01/15/2013</span><span class="t" id="t48" style="left:732.26px;top:767.08px;font-size:31.33px;line-height:31.33px;color:#18205c;-webkit-text-stroke:0.45px #fff;letter-spacing:3.714px;transform:scaleX(0.7411)">03</span><span class="t" id="t49" style="left:842.22px;top:767.08px;font-size:31.33px;line-height:31.33px;color:#18205c;-webkit-text-stroke:0.45px #fff;letter-spacing:1.918px;transform:scaleX(0.7763)">01/22/2013</span><span class="t" id="t50" style="left:732.26px;top:807.18px;font-size:31.33px;line-height:31.33px;color:#18205c;-webkit-text-stroke:0.45px #efefef;letter-spacing:3.714px;transform:scaleX(0.7411)">04</span><span class="t" id="t51" style="left:842.23px;top:807.18px;font-size:31.33px;line-height:31.33px;color:#18205c;-webkit-text-stroke:0.45px #efefef;letter-spacing:1.918px;transform:scaleX(0.7705)">01/29/2013</span><span class="t" id="t52" style="left:732.26px;top:848.28px;font-size:31.33px;line-height:31.33px;color:#18205c;-webkit-text-stroke:0.45px #fff;letter-spacing:3.714px;transform:scaleX(0.7411)">05</span><span class="t" id="t53" style="left:842.22px;top:848.28px;font-size:31.33px;line-height:31.33px;color:#18205c;-webkit-text-stroke:0.45px #fff;letter-spacing:1.918px;transform:scaleX(0.7763)">02/05/2013</span><span class="t" id="t54" style="left:732.26px;top:888.38px;font-size:31.33px;line-height:31.33px;color:#18205c;-webkit-text-stroke:0.45px #efefef;letter-spacing:3.714px;transform:scaleX(0.7411)">06</span><span class="t" id="t55" style="left:842.23px;top:888.38px;font-size:31.33px;line-height:31.33px;color:#18205c;-webkit-text-stroke:0.45px #efefef;letter-spacing:1.918px;transform:scaleX(0.7705)">02/12/2013</span><span class="t" id="t56" style="left:732.24px;top:929.48px;font-size:31.33px;line-height:31.33px;color:#18205c;-webkit-text-stroke:0.45px #fff;letter-spacing:3.603px;transform:scaleX(0.7640)">07</span><span class="t" id="t57" style="left:842.22px;top:929.48px;font-size:31.33px;line-height:31.33px;color:#18205c;-webkit-text-stroke:0.45px #fff;letter-spacing:1.918px;transform:scaleX(0.7763)">02/19/2013</span><span class="t" id="t58" style="left:732.26px;top:969.58px;font-size:31.33px;line-height:31.33px;color:#18205c;-webkit-text-stroke:0.45px #efefef;letter-spacing:3.714px;transform:scaleX(0.7411)">08</span><span class="t" id="t59" style="left:842.23px;top:969.58px;font-size:31.33px;line-height:31.33px;color:#18205c;-webkit-text-stroke:0.45px #efefef;letter-spacing:1.918px;transform:scaleX(0.7705)">02/26/2013</span><span class="t" id="t60" style="left:732.24px;top:1010.68px;font-size:31.33px;line-height:31.33px;color:#18205c;-webkit-text-stroke:0.45px #fff;letter-spacing:3.603px;transform:scaleX(0.7640)">09</span><span class="t" id="t61" style="left:842.22px;top:1010.68px;font-size:31.33px;line-height:31.33px;color:#18205c;-webkit-text-stroke:0.45px #fff;letter-spacing:1.918px;transform:scaleX(0.7763)">03/05/2013</span><span class="t" id="t62" style="left:731.47px;top:1050.78px;font-size:31.33px;line-height:31.33px;color:#18205c;-webkit-text-stroke:0.45px #efefef;letter-spacing:3.603px;transform:scaleX(0.7640)">10</span><span class="t" id="t63" style="left:842.23px;top:1050.78px;font-size:31.33px;line-height:31.33px;color:#18205c;-webkit-text-stroke:0.45px #efefef;letter-spacing:1.918px;transform:scaleX(0.7705)">03/12/2013</span><span class="t" id="t64" style="left:731.30px;top:1091.88px;font-size:31.33px;line-height:31.33px;color:#18205c;-webkit-text-stroke:0.45px #fff;letter-spacing:3.233px;transform:scaleX(0.8513)">11</span><span class="t" id="t65" style="left:842.22px;top:1091.88px;font-size:31.33px;line-height:31.33px;color:#18205c;-webkit-text-stroke:0.45px #fff;letter-spacing:1.918px;transform:scaleX(0.7763)">03/19/2013</span><span class="t" id="t66" style="left:731.42px;top:1131.98px;font-size:31.33px;line-height:31.33px;color:#18205c;-webkit-text-stroke:0.45px #efefef;letter-spacing:3.491px;transform:scaleX(0.7883)">12</span><span class="t" id="t67" style="left:842.23px;top:1131.98px;font-size:31.33px;line-height:31.33px;color:#18205c;-webkit-text-stroke:0.45px #efefef;letter-spacing:1.918px;transform:scaleX(0.7705)">03/26/2013</span><span class="t" id="t68" style="left:731.47px;top:1173.08px;font-size:31.33px;line-height:31.33px;color:#18205c;-webkit-text-stroke:0.45px #fff;letter-spacing:3.603px;transform:scaleX(0.7640)">13</span><span class="t" id="t69" style="left:842.22px;top:1173.08px;font-size:31.33px;line-height:31.33px;color:#18205c;-webkit-text-stroke:0.45px #fff;letter-spacing:1.918px;transform:scaleX(0.7763)">04/02/2013</span><span class="t" id="t70" style="left:731.47px;top:1214.18px;font-size:31.33px;line-height:31.33px;color:#18205c;-webkit-text-stroke:0.45px #efefef;letter-spacing:3.603px;transform:scaleX(0.7640)">14</span><span class="t" id="t71" style="left:842.23px;top:1214.18px;font-size:31.33px;line-height:31.33px;color:#18205c;-webkit-text-stroke:0.45px #efefef;letter-spacing:1.918px;transform:scaleX(0.7705)">04/09/2013</span><span class="t" id="t72" style="left:142.67px;top:1710.41px;font-size:31.76px;line-height:31.76px;color:#111;-webkit-text-stroke:0.45px #f3f3f3;letter-spacing:0.000px;transform:scaleX(0.8342)">Ok</span><span class="t" id="t73" style="left:383.56px;top:1710.41px;font-size:31.76px;line-height:31.76px;color:#111;-webkit-text-stroke:0.45px #f3f3f3;letter-spacing:1.893px;transform:scaleX(0.7223)">Exit</span><span class="t" id="t74" style="left:601.99px;top:1710.41px;font-size:31.76px;line-height:31.76px;color:#111;-webkit-text-stroke:0.45px #f3f3f3;letter-spacing:1.915px;transform:scaleX(0.7572)">Previous</span><span class="t" id="t75" style="left:21.48px;top:1805.59px;font-size:31.91px;line-height:31.91px;color:#fff;-webkit-text-stroke:0.45px #066bce;letter-spacing:1.797px;transform:scaleX(0.7589)">powered by Computer Guidance Corporation</span><span class="t" id="t76" style="left:603.99px;top:1805.59px;font-size:31.91px;line-height:31.91px;color:#fff;-webkit-text-stroke:0.45px #066bce;letter-spacing:1.792px;transform:scaleX(0.7535)">User&#160;Name:&#160;&#160;TB350&#160;(Tom&#160;Barclay)</span><span class="t" id="t77" style="left:1394.55px;top:1805.59px;font-size:31.91px;line-height:31.91px;color:#fff;-webkit-text-stroke:0.45px #066bce;letter-spacing:1.875px;transform:scaleX(0.7252)">LBCC&#160;Group:&#160;&#160;QA&#160;-&#160;ALL</span><span class="t" id="t78" style="left:1932.54px;top:1805.59px;font-size:31.91px;line-height:31.91px;color:#fff;-webkit-text-stroke:0.45px #066bce;letter-spacing:1.908px;transform:scaleX(0.7284)">Menu:&#160;&#160;Main</span><span class="t" id="t79" style="left:2234.00px;top:1805.59px;font-size:31.91px;line-height:31.91px;color:#fff;-webkit-text-stroke:0.45px #066bce;letter-spacing:1.625px;transform:scaleX(0.7501)">Version: 4.0 | SP: 999</span>
</body></html>
